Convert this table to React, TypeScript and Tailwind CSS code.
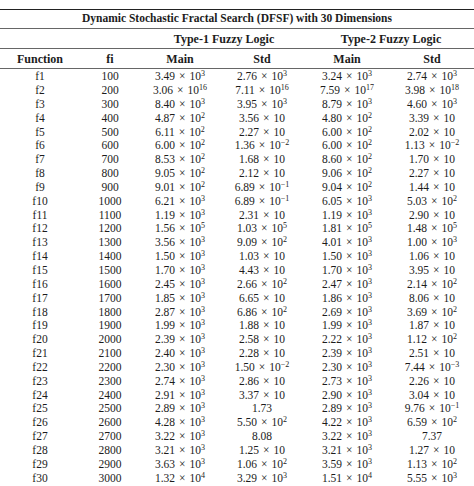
import React from 'react';

// each value: "m|e" -> m × 10^e, "m|" -> m × 10, "m" -> plain
const rows: string[][] = [
  ['f1', '100', '3.49|3', '2.76|3', '3.24|3', '2.74|3'],
  ['f2', '200', '3.06|16', '7.11|16', '7.59|17', '3.98|18'],
  ['f3', '300', '8.40|3', '3.95|3', '8.79|3', '4.60|3'],
  ['f4', '400', '4.87|2', '3.56|', '4.80|2', '3.39|'],
  ['f5', '500', '6.11|2', '2.27|', '6.00|2', '2.02|'],
  ['f6', '600', '6.00|2', '1.36|−2', '6.00|2', '1.13|−2'],
  ['f7', '700', '8.53|2', '1.68|', '8.60|2', '1.70|'],
  ['f8', '800', '9.05|2', '2.12|', '9.06|2', '2.27|'],
  ['f9', '900', '9.01|2', '6.89|−1', '9.04|2', '1.44|'],
  ['f10', '1000', '6.21|3', '6.89|−1', '6.05|3', '5.03|2'],
  ['f11', '1100', '1.19|3', '2.31|', '1.19|3', '2.90|'],
  ['f12', '1200', '1.56|5', '1.03|5', '1.81|5', '1.48|5'],
  ['f13', '1300', '3.56|3', '9.09|2', '4.01|3', '1.00|3'],
  ['f14', '1400', '1.50|3', '1.03|', '1.50|3', '1.06|'],
  ['f15', '1500', '1.70|3', '4.43|', '1.70|3', '3.95|'],
  ['f16', '1600', '2.45|3', '2.66|2', '2.47|3', '2.14|2'],
  ['f17', '1700', '1.85|3', '6.65|', '1.86|3', '8.06|'],
  ['f18', '1800', '2.87|3', '6.86|2', '2.69|3', '3.69|2'],
  ['f19', '1900', '1.99|3', '1.88|', '1.99|3', '1.87|'],
  ['f20', '2000', '2.39|3', '2.58|', '2.22|3', '1.12|2'],
  ['f21', '2100', '2.40|3', '2.28|', '2.39|3', '2.51|'],
  ['f22', '2200', '2.30|3', '1.50|−2', '2.30|3', '7.44|−3'],
  ['f23', '2300', '2.74|3', '2.86|', '2.73|3', '2.26|'],
  ['f24', '2400', '2.91|3', '3.37|', '2.90|3', '3.04|'],
  ['f25', '2500', '2.89|3', '1.73', '2.89|3', '9.76|−1'],
  ['f26', '2600', '4.28|3', '5.50|2', '4.22|3', '6.59|2'],
  ['f27', '2700', '3.22|3', '8.08', '3.22|3', '7.37'],
  ['f28', '2800', '3.21|3', '1.25|', '3.21|3', '1.27|'],
  ['f29', '2900', '3.63|3', '1.06|2', '3.59|3', '1.13|2'],
  ['f30', '3000', '1.32|4', '3.29|3', '1.51|4', '5.55|3'],
];

const Num: React.FC<{ v: string }> = ({ v }) => {
  if (!v.includes('|')) return <span>{v}</span>;
  const [m, e] = v.split('|');
  return (
    <span>
      {m}
      <span className="mx-[4px]">×</span>
      10
      {e && <sup className="text-[8px] leading-none top-[-0.5em]">{e}</sup>}
    </span>
  );
};

const grid = 'grid grid-cols-[80px_60px_80px_84px_86px_84px] text-center';

export default function App() {
  return (
    <div
      className="w-[474px] h-[486px] bg-white pt-[9px] text-[#1c1c1c] overflow-hidden"
      style={{ fontFamily: '"Liberation Serif", "DejaVu Serif", serif' }}
    >
      <div className="border-t-[1.5px] border-[#222]" />
      <div className="h-[18px] flex items-center justify-center font-bold text-[11.5px]">
        Dynamic Stochastic Fractal Search (DFSF) with 30 Dimensions
      </div>
      <div className="border-t border-[#666]" />
      <div className="h-[19px] grid grid-cols-[140px_164px_170px] items-center text-center font-bold text-[12px]">
        <div />
        <div className="pl-[4px]">Type-1 Fuzzy Logic</div>
        <div className="pl-[4px]">Type-2 Fuzzy Logic</div>
      </div>
      <div className="border-t border-[#666]" />
      <div className={`${grid} h-[19px] items-center font-bold text-[12px]`}>
        <div>Function</div>
        <div>fi</div>
        <div>Main</div>
        <div>Std</div>
        <div>Main</div>
        <div>Std</div>
      </div>
      <div className="border-t border-[#666]" />
      <div className="pt-[1px]">
        {rows.map((r) => (
          <div key={r[0]} className={`${grid} h-[13.85px] items-center text-[11.5px] leading-none`}>
            <div>{r[0]}</div>
            <div>{r[1]}</div>
            {r.slice(2).map((v, i) => (
              <div key={i} className="whitespace-nowrap">
                <Num v={v} />
              </div>
            ))}
          </div>
        ))}
      </div>
    </div>
  );
}
